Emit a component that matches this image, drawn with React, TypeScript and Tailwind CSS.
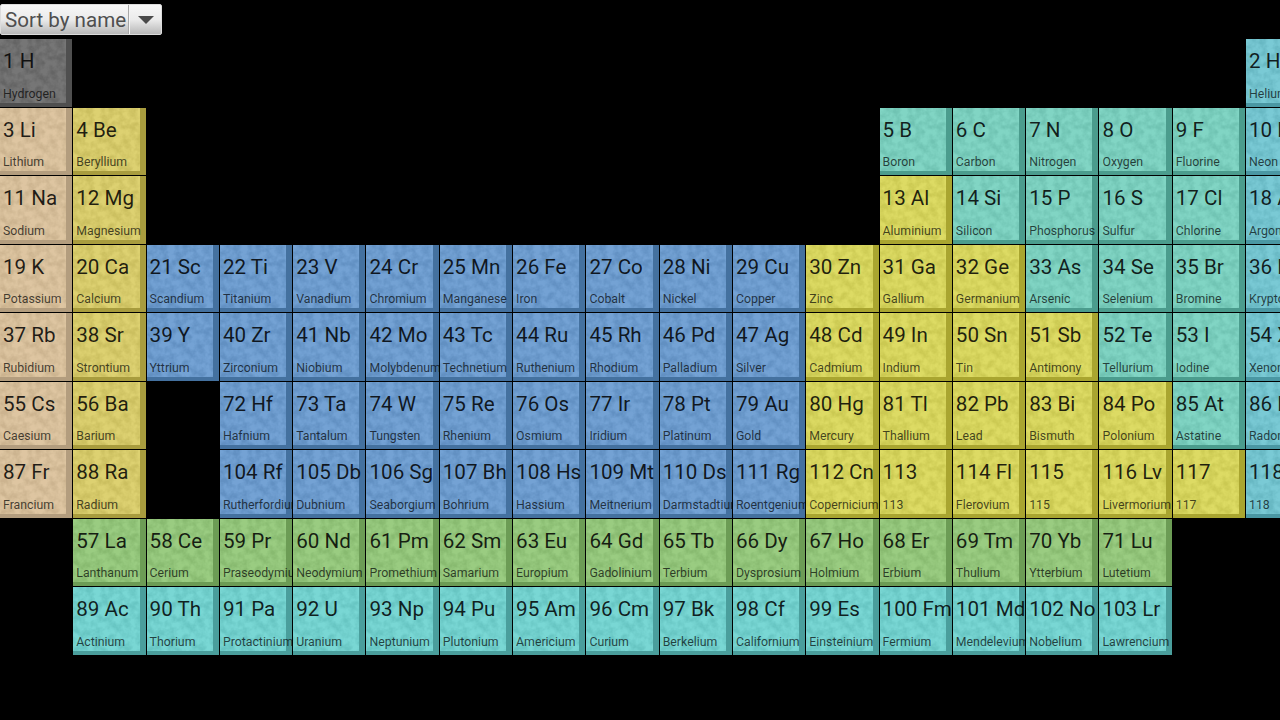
type Cat = 'gray' | 'alkali' | 'earth' | 'trans' | 'post' | 'non' | 'noble' | 'lan' | 'act';

const catClass: Record<Cat, { bg: string; bevel: string }> = {
  gray: { bg: 'bg-[#6c6c6c]', bevel: 'border-r-[#4f4f4f] border-b-[#4f4f4f]' },
  alkali: { bg: 'bg-[#dbc19a]', bevel: 'border-r-[#b39d7e] border-b-[#b39d7e]' },
  earth: { bg: 'bg-[#dacd66]', bevel: 'border-r-[#a89c3e] border-b-[#a89c3e]' },
  trans: { bg: 'bg-[#699bd1]', bevel: 'border-r-[#44719f] border-b-[#44719f]' },
  post: { bg: 'bg-[#dad858]', bevel: 'border-r-[#a9a530] border-b-[#a9a530]' },
  non: { bg: 'bg-[#78d2c0]', bevel: 'border-r-[#4b9c8d] border-b-[#4b9c8d]' },
  noble: { bg: 'bg-[#70c6d2]', bevel: 'border-r-[#4a97a3] border-b-[#4a97a3]' },
  lan: { bg: 'bg-[#92c878]', bevel: 'border-r-[#6c9c55] border-b-[#6c9c55]' },
  act: { bg: 'bg-[#6fd4d1]', bevel: 'border-r-[#4a9e9c] border-b-[#4a9e9c]' },
};

// [row, first column, category of each, entries as "num sym name"]
type Run = [number, number, Cat, string[]];

const runs: Run[] = [
  [1, 1, 'gray', ['1 H Hydrogen']],
  [1, 18, 'noble', ['2 He Helium']],
  [2, 1, 'alkali', ['3 Li Lithium']],
  [2, 2, 'earth', ['4 Be Beryllium']],
  [2, 13, 'non', ['5 B Boron', '6 C Carbon', '7 N Nitrogen', '8 O Oxygen', '9 F Fluorine']],
  [2, 18, 'noble', ['10 Ne Neon']],
  [3, 1, 'alkali', ['11 Na Sodium']],
  [3, 2, 'earth', ['12 Mg Magnesium']],
  [3, 13, 'post', ['13 Al Aluminium']],
  [3, 14, 'non', ['14 Si Silicon', '15 P Phosphorus', '16 S Sulfur', '17 Cl Chlorine']],
  [3, 18, 'noble', ['18 Ar Argon']],
  [4, 1, 'alkali', ['19 K Potassium']],
  [4, 2, 'earth', ['20 Ca Calcium']],
  [4, 3, 'trans', ['21 Sc Scandium', '22 Ti Titanium', '23 V Vanadium', '24 Cr Chromium', '25 Mn Manganese', '26 Fe Iron', '27 Co Cobalt', '28 Ni Nickel', '29 Cu Copper']],
  [4, 12, 'post', ['30 Zn Zinc', '31 Ga Gallium', '32 Ge Germanium']],
  [4, 15, 'non', ['33 As Arsenic', '34 Se Selenium', '35 Br Bromine']],
  [4, 18, 'noble', ['36 Kr Krypton']],
  [5, 1, 'alkali', ['37 Rb Rubidium']],
  [5, 2, 'earth', ['38 Sr Strontium']],
  [5, 3, 'trans', ['39 Y Yttrium', '40 Zr Zirconium', '41 Nb Niobium', '42 Mo Molybdenum', '43 Tc Technetium', '44 Ru Ruthenium', '45 Rh Rhodium', '46 Pd Palladium', '47 Ag Silver']],
  [5, 12, 'post', ['48 Cd Cadmium', '49 In Indium', '50 Sn Tin', '51 Sb Antimony']],
  [5, 16, 'non', ['52 Te Tellurium', '53 I Iodine']],
  [5, 18, 'noble', ['54 Xe Xenon']],
  [6, 1, 'alkali', ['55 Cs Caesium']],
  [6, 2, 'earth', ['56 Ba Barium']],
  [6, 4, 'trans', ['72 Hf Hafnium', '73 Ta Tantalum', '74 W Tungsten', '75 Re Rhenium', '76 Os Osmium', '77 Ir Iridium', '78 Pt Platinum', '79 Au Gold']],
  [6, 12, 'post', ['80 Hg Mercury', '81 Tl Thallium', '82 Pb Lead', '83 Bi Bismuth', '84 Po Polonium']],
  [6, 17, 'non', ['85 At Astatine']],
  [6, 18, 'noble', ['86 Rn Radon']],
  [7, 1, 'alkali', ['87 Fr Francium']],
  [7, 2, 'earth', ['88 Ra Radium']],
  [7, 4, 'trans', ['104 Rf Rutherfordium', '105 Db Dubnium', '106 Sg Seaborgium', '107 Bh Bohrium', '108 Hs Hassium', '109 Mt Meitnerium', '110 Ds Darmstadtium', '111 Rg Roentgenium']],
  [7, 12, 'post', ['112 Cn Copernicium', '113 113', '114 Fl Flerovium', '115 115', '116 Lv Livermorium', '117 117']],
  [7, 18, 'noble', ['118 118']],
  [8, 2, 'lan', ['57 La Lanthanum', '58 Ce Cerium', '59 Pr Praseodymium', '60 Nd Neodymium', '61 Pm Promethium', '62 Sm Samarium', '63 Eu Europium', '64 Gd Gadolinium', '65 Tb Terbium', '66 Dy Dysprosium', '67 Ho Holmium', '68 Er Erbium', '69 Tm Thulium', '70 Yb Ytterbium', '71 Lu Lutetium']],
  [9, 2, 'act', ['89 Ac Actinium', '90 Th Thorium', '91 Pa Protactinium', '92 U Uranium', '93 Np Neptunium', '94 Pu Plutonium', '95 Am Americium', '96 Cm Curium', '97 Bk Berkelium', '98 Cf Californium', '99 Es Einsteinium', '100 Fm Fermium', '101 Md Mendelevium', '102 No Nobelium', '103 Lr Lawrencium']],
];

function Tile({ entry, cat, row, col }: { entry: string; cat: Cat; row: number; col: number }) {
  const parts = entry.split(' ');
  const title = parts.length === 3 ? `${parts[0]} ${parts[1]}` : parts[0];
  const name = parts[parts.length - 1];
  const c = catClass[cat];

  return (
    <div
      className={`relative overflow-hidden flex flex-col justify-between pl-[3px] pt-[9px] pb-[6px] ${c.bg}`}
      style={{ gridRow: row, gridColumn: col }}
    >
      {/* stone grain */}
      <svg className="absolute inset-0 w-full h-full" aria-hidden="true">
        <rect width="100%" height="100%" filter="url(#grain)" />
      </svg>
      {/* bevel on the right and bottom */}
      <div className={`absolute inset-0 border-r-[6px] border-b-[4px] border-t-0 border-l-0 ${c.bevel}`} />
      <span className="relative text-[20.6px] leading-[26px] text-black/85 whitespace-nowrap">{title}</span>
      <span className="relative text-[12.3px] leading-[14px] text-black/70 whitespace-nowrap">{name}</span>
    </div>
  );
}

export default function App() {
  return (
    <div className="w-[1280px] h-[720px] overflow-hidden bg-black font-['Roboto',sans-serif]">
      <svg className="absolute w-0 h-0" aria-hidden="true">
        <filter id="grain" x="0" y="0" width="100%" height="100%" colorInterpolationFilters="sRGB">
          <feTurbulence type="fractalNoise" baseFrequency="0.14" numOctaves="3" seed="4" />
          <feColorMatrix values="2.4 0 0 0 -0.6  2.4 0 0 0 -0.6  2.4 0 0 0 -0.6  0 0 0 0 0.07" />
        </filter>
      </svg>

      <div className="h-[39px] pt-1">
        <div className="flex w-[162px] h-[31px] rounded-[2px] border border-[#dcdcdc] bg-gradient-to-b from-[#f7f7f7] via-[#ebebeb] to-[#b8b8b8]">
          <div className="flex-1 pl-[4px] text-[20.6px] leading-[30px] text-[#4f4f4f] border-r border-[#a8a8a8] whitespace-nowrap">
            Sort by name
          </div>
          <div className="w-[32px] flex items-center justify-center border-l border-[#f4f4f4]">
            <svg width="16" height="8" viewBox="0 0 16 8">
              <path d="M0 0H16L8 8Z" fill="#4a4a4a" />
            </svg>
          </div>
        </div>
      </div>

      <div className="grid grid-cols-[repeat(18,72.3px)] auto-rows-[67.5px] gap-px">
        {runs.flatMap(([row, col, cat, items]) =>
          items.map((entry, i) => <Tile key={entry} entry={entry} cat={cat} row={row} col={col + i} />)
        )}
      </div>
    </div>
  );
}
